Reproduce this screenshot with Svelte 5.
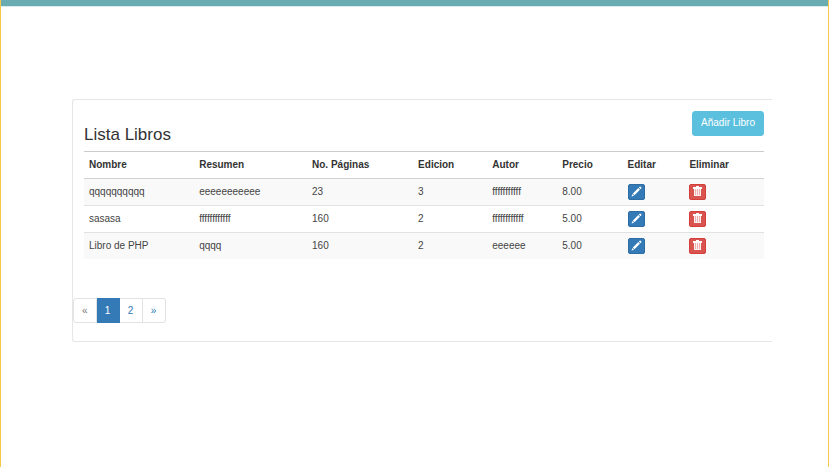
<script lang="ts">
  interface Book {
    name: string;
    summary: string;
    pages: number;
    edition: number;
    author: string;
    price: number;
  }

  const columns = ["Nombre", "Resumen", "No. Páginas", "Edicion", "Autor", "Precio", "Editar", "Eliminar"];

  const books: Book[] = [
    { name: "qqqqqqqqqq", summary: "eeeeeeeeeee", pages: 23, edition: 3, author: "fffffffffff", price: 8 },
    { name: "sasasa", summary: "ffffffffffff", pages: 160, edition: 2, author: "ffffffffffff", price: 5 },
    { name: "Libro de PHP", summary: "qqqq", pages: 160, edition: 2, author: "eeeeee", price: 5 },
  ];

  const pages = [1, 2];
  let current = $state(1);

  function go(e: MouseEvent, page: number) {
    e.preventDefault();
    if (page >= 1 && page <= pages.length) current = page;
  }
</script>

<div class="page">
  <header class="topbar"></header>

  <main class="panel">
    <div class="content">
      <div class="heading">
        <h1>Lista Libros</h1>
        <a class="btn add" href="#add">Añadir Libro</a>
      </div>

      <table>
        <colgroup>
          <col class="c-name" /><col class="c-summary" /><col class="c-pages" /><col class="c-edition" />
          <col class="c-author" /><col class="c-price" /><col class="c-edit" /><col />
        </colgroup>
        <thead>
          <tr>
            {#each columns as column}
              <th scope="col">{column}</th>
            {/each}
          </tr>
        </thead>
        <tbody>
          {#each books as book}
            <tr>
              <td>{book.name}</td>
              <td>{book.summary}</td>
              <td>{book.pages}</td>
              <td>{book.edition}</td>
              <td>{book.author}</td>
              <td>{book.price.toFixed(2)}</td>
              <td class="action">
                <a class="btn icon edit" href="#edit" aria-label="Editar {book.name}">
                  <svg viewBox="0 0 20 20" width="11" height="11" fill="currentColor"><path d="M15.8 1.2a1 1 0 0 1 1.5 0l1.5 1.5a1 1 0 0 1 0 1.500l-1.500 1.500-3-3zM13.300 3.700l3 3L6.300 16.700l-3-3zM2.500 14.500l3 3L1 19z"/></svg>
                </a>
              </td>
              <td class="action">
                <button type="button" class="btn icon delete" aria-label="Eliminar {book.name}">
                  <svg viewBox="0 0 11 11" width="11" height="11" fill="currentColor"><path d="M4 0h3v1h3v2H1V1h3z"/><path d="M2 3h7v7H2z" opacity=".55"/><path d="M2 3h1v7H2zM4 3h1v7H4zM6 3h1v7H6zM8 3h1v7H8zM2 9h7v1H2z" opacity=".8"/></svg>
                </button>
              </td>
            </tr>
          {/each}
        </tbody>
      </table>
    </div>

    <nav aria-label="Paginación">
      <ul class="pagination">
        <li class:disabled={current === 1}>
          <a href="#prev" aria-label="Anterior" onclick={(e) => go(e, current - 1)}>«</a>
        </li>
        {#each pages as page}
          <li class:active={page === current}>
            <a href="#page-{page}" aria-current={page === current ? "page" : undefined} onclick={(e) => go(e, page)}>{page}</a>
          </li>
        {/each}
        <li class:disabled={current === pages.length}>
          <a href="#next" aria-label="Siguiente" onclick={(e) => go(e, current + 1)}>»</a>
        </li>
      </ul>
    </nav>
  </main>
</div>

<style>
  :global(body) { background: #fff; }
  .page {
    box-sizing: border-box;
    min-height: 100vh;
    border: solid #f7c948;
    border-width: 0 1px;
    font-family: "Liberation Sans", Arial, sans-serif;
    font-size: 10px;
    line-height: 14px;
    color: #444;
  }
  .topbar {
    height: 6px;
    background: #69adb2;
    border-bottom: 1px solid #dcebec;
  }
  .panel {
    margin: 92px 56px 0 71px;
    padding-bottom: 18px;
    border: 1px solid #e6e6e6;
    border-right: 0;
    border-radius: 3px 0 0 3px;
  }
  .content { padding: 11px 8px 0 11px; }
  .heading {
    display: flex;
    justify-content: space-between;
    align-items: flex-start;
  }
  h1 {
    margin: 14px 0 6px;
    font-size: 17px;
    line-height: 20px;
    font-weight: 400;
    color: #333;
  }
  .btn {
    display: block;
    box-sizing: border-box;
    border: 1px solid;
    border-radius: 3px;
    color: #fff;
    text-decoration: none;
    cursor: pointer;
  }
  .add {
    padding: 4px 8px 5px;
    background: #5bc0de;
    border-color: #5bc0de;
  }
  table {
    width: 100%;
    table-layout: fixed;
    border-collapse: collapse;
  }
  .c-name { width: 16.2%; }
  .c-summary { width: 16.6%; }
  .c-pages { width: 15.6%; }
  .c-edition { width: 10.9%; }
  .c-author { width: 10.3%; }
  .c-price { width: 9.6%; }
  .c-edit { width: 9.1%; }
  th, td {
    padding: 6px 5px;
    border-top: 1px solid #e2e2e2;
    text-align: left;
  }
  th {
    border-color: #ccc;
    color: #333;
  }
  tbody tr:first-child td { border-top-color: #d2d2d2; }
  tbody tr:nth-child(odd) { background: #f9f9f9; }
  .action { padding-top: 5px; padding-bottom: 5px; }
  .icon {
    width: 17px;
    height: 16px;
    padding: 1px 2px 2px;
    border-radius: 2px;
  }
  .icon svg { display: block; }
  .edit { background: #337ab7; border-color: #2e6da4; }
  .delete { background: #d9534f; border-color: #d43f3a; }
  .pagination {
    display: flex;
    margin: 39px 0 0;
    padding: 0;
    list-style: none;
  }
  .pagination a {
    display: block;
    box-sizing: border-box;
    min-width: 23px;
    padding: 5px 8px 4px;
    border: 1px solid #e2e2e2;
    border-left-width: 0;
    color: #337ab7;
    text-align: center;
    text-decoration: none;
  }
  .pagination li:first-child a { border-left-width: 1px; border-radius: 3px 0 0 3px; }
  .pagination li:last-child a { border-radius: 0 3px 3px 0; }
  .pagination .active a { background: #337ab7; border-color: #337ab7; color: #fff; }
  .pagination .disabled a { color: #777; cursor: not-allowed; }
</style>
